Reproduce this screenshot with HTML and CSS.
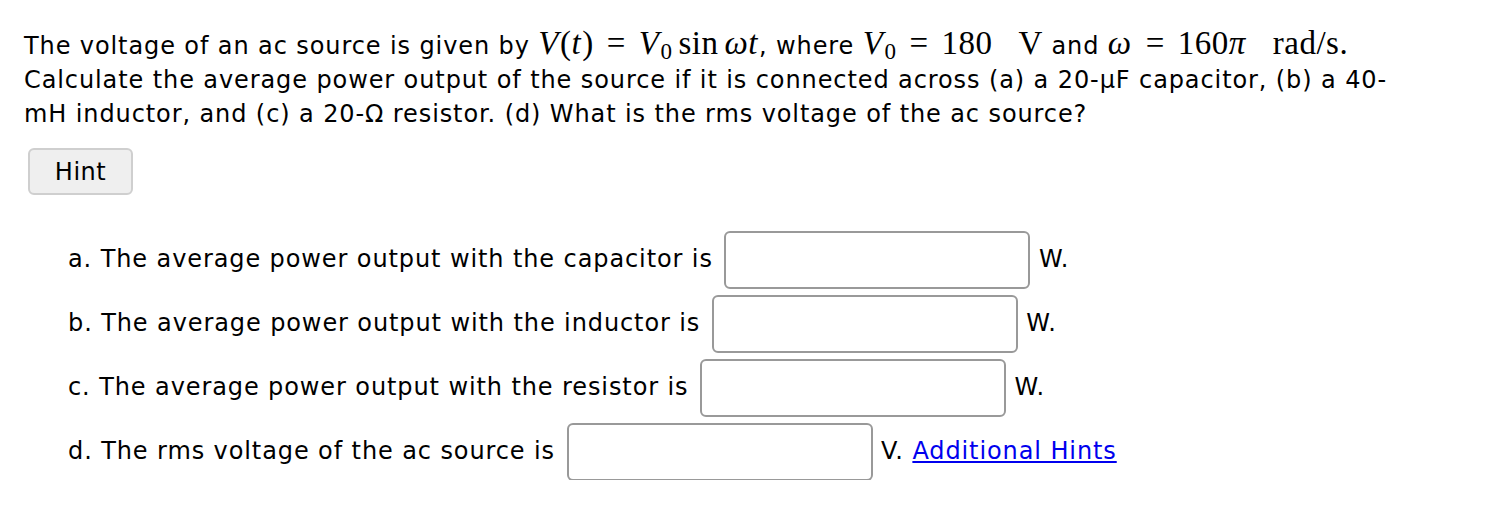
FILE: index.html
```html
<!DOCTYPE html>
<html>
<head>
<meta charset="utf-8">
<link rel="stylesheet" href="styles.css">
</head>
<body>
<div class="page">
  <p class="question">The voltage of an ac source is given by <span class="math"><i>V</i>(<i>t</i>)<span class="rel">=</span><i>V</i><sub>0</sub><span class="op">sin</span><i>ωt</i></span>, where <span class="math"><i>V</i><sub>0</sub><span class="rel">=</span>180<span class="quad"></span>V</span> and <span class="math"><i>ω</i><span class="rel">=</span>160<i>π</i><span class="quad"></span>rad/s.</span><br>Calculate the average power output of the source if it is connected across (a) a 20-μF capacitor, (b) a 40-<br>mH inductor, and (c) a 20-Ω resistor. (d) What is the rms voltage of the ac source?</p>
  <button class="hint" type="button">Hint</button>
  <ol class="answers">
    <li class="row">a. The average power output with the capacitor is <input class="field" type="text"> W.</li>
    <li class="row">b. The average power output with the inductor is <input class="field" type="text"> W.</li>
    <li class="row">c. The average power output with the resistor is <input class="field" type="text"> W.</li>
    <li class="row">d. The rms voltage of the ac source is <input class="field" type="text"> V. <a class="more" href="#">Additional Hints</a></li>
  </ol>
</div>
</body>
</html>
```
FILE: styles.css
```css
html, body {
  margin: 0;
  padding: 0;
  background: #ffffff;
}
.page {
  padding: 29px 24px 0 24px;
  font-family: "DejaVu Sans", Verdana, sans-serif;
  font-size: 24px;
  letter-spacing: 0.9px;
  color: #000;
}
.question {
  margin: 0;
  line-height: 34px;
  white-space: nowrap;
}
.math {
  font-family: "Liberation Serif", "Times New Roman", serif;
  font-size: 33px;
  line-height: 0;
  letter-spacing: 0.5px;
}
.math i {
  font-style: italic;
  padding-right: 1px;
}
.math sub {
  font-size: 23px;
  vertical-align: -5px;
  line-height: 0;
}
.rel {
  margin: 0 13px;
}
.op {
  margin: 0 6px 0 6px;
}
.quad {
  display: inline-block;
  width: 26px;
}
.hint {
  margin: 17px 0 0 4px;
  width: 105px;
  height: 47px;
  font-family: "DejaVu Sans", Verdana, sans-serif;
  font-size: 24px;
  letter-spacing: 0.5px;
  color: #000;
  background: #efefef;
  border: 2px solid #cfcfcf;
  border-radius: 6px;
  padding: 0;
}
.answers {
  list-style: none;
  margin: 35px 0 0 0;
  padding: 0 0 0 44px;
  display: flex;
  flex-direction: column;
  gap: 6px;
}
.row {
  height: 58px;
  line-height: 58px;
  white-space: nowrap;
}
.field {
  box-sizing: border-box;
  width: 306px;
  height: 58px;
  margin: 0 0 0 3px;
  vertical-align: middle;
  border: 2px solid #999999;
  border-radius: 6px;
  background: #fff;
  font-size: 22px;
}
.more {
  color: #0000ee;
  text-decoration: underline;
}
```
